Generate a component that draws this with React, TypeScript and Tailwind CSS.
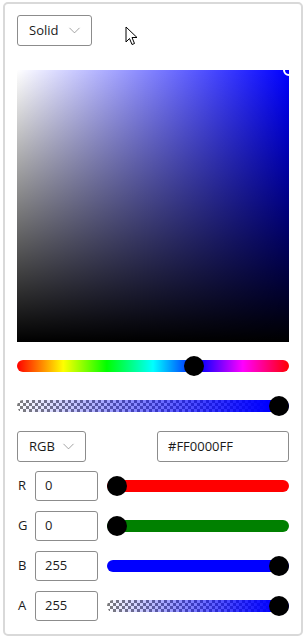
import { ChevronDown } from "lucide-react";

const font = { fontFamily: '"Open Sans", "Noto Sans", sans-serif' };

function Dropdown({ label, w }: { label: string; w: string }) {
  return (
    <div className={`flex h-[31px] ${w} items-center justify-between rounded-[3px] border border-[#8c8c8c] bg-white pl-[11px] pr-[7px] text-[13px] text-[#1b1b1b]`}>
      <span>{label}</span>
      <ChevronDown className="h-[19px] w-[19px] text-[#8a8a8a]" strokeWidth={1} />
    </div>
  );
}

function Slider({ track, pos }: { track: string; pos: number }) {
  return (
    <div className="relative h-5 w-full">
      <div className={`absolute inset-x-0 top-1/2 h-[12px] -translate-y-1/2 rounded-full ${track}`} />
      <div
        className="absolute top-0 h-5 w-5 rounded-full bg-black"
        style={{ left: `calc(${pos} * (100% - 20px))` }}
      />
    </div>
  );
}

const checker =
  "bg-[linear-gradient(to_right,rgba(0,0,255,0),#00f_92%),repeating-conic-gradient(#7d7d7d_0_25%,#fff_0_50%)] [background-size:100%_100%,6px_6px]";

function Row({ label, value, track, pos }: { label: string; value: string; track: string; pos: number }) {
  return (
    <div className="flex h-[30px] items-center">
      <span className="w-[18px] pl-[1px] text-[13px] text-[#1b1b1b]">{label}</span>
      <div className="flex h-[30px] w-[63px] items-center rounded-[3px] border border-[#8c8c8c] pl-[9px] text-[13px] text-[#1b1b1b]">
        {value}
      </div>
      <div className="ml-[9px] flex-1">
        <Slider track={track} pos={pos} />
      </div>
    </div>
  );
}

export default function App() {
  return (
    <div className="h-[644px] w-[308px] bg-white pl-[3px] pt-[2px]" style={font}>
      <div className="relative flex h-[634px] w-[300px] flex-col rounded-[5px] border-2 border-[#d9d9d9] px-[12px] pt-[11px]">
        <div className="flex items-center">
          <Dropdown label="Solid" w="w-[75px]" />
          <svg className="absolute left-[120px] top-[22px]" width="14" height="20" viewBox="0 0 14 20">
            <path d="M1 1 L1 16 L4.5 12.5 L7 18.5 L9.5 17.5 L7 11.5 L12 11.5 Z" fill="#fff" stroke="#000" strokeWidth="1" strokeLinejoin="round" />
          </svg>
        </div>
        <div className="relative mt-[24px] h-[272px] w-[272px] bg-[linear-gradient(to_top,#000,rgba(0,0,0,0)),linear-gradient(to_right,#fff,#00f)]">
          <div className="absolute -right-[6px] -top-[6px] h-3 w-3 rounded-full border-2 border-white" />
        </div>
        <div className="mt-[14px]">
          <Slider
            track="bg-[linear-gradient(to_right,#f00,#ff0_17%,#0f0_33%,#0ff_50%,#00f_67%,#f0f_83%,#f00)]"
            pos={0.663}
          />
        </div>
        <div className="mt-[20px]">
          <Slider track={checker} pos={1} />
        </div>
        <div className="mt-[15px] flex items-center justify-between">
          <Dropdown label="RGB" w="w-[69px]" />
          <div className="flex h-[31px] w-[132px] items-center rounded-[3px] border border-[#8c8c8c] pl-[10px] text-[13px] text-[#1b1b1b]">
            #FF0000FF
          </div>
        </div>
        <div className="mt-[9px] flex flex-col gap-[10px]">
          <Row label="R" value="0" track="bg-[#ff0000]" pos={0} />
          <Row label="G" value="0" track="bg-[#008000]" pos={0} />
          <Row label="B" value="255" track="bg-[#0000ff]" pos={1} />
          <Row label="A" value="255" track={checker} pos={1} />
        </div>
      </div>
    </div>
  );
}
